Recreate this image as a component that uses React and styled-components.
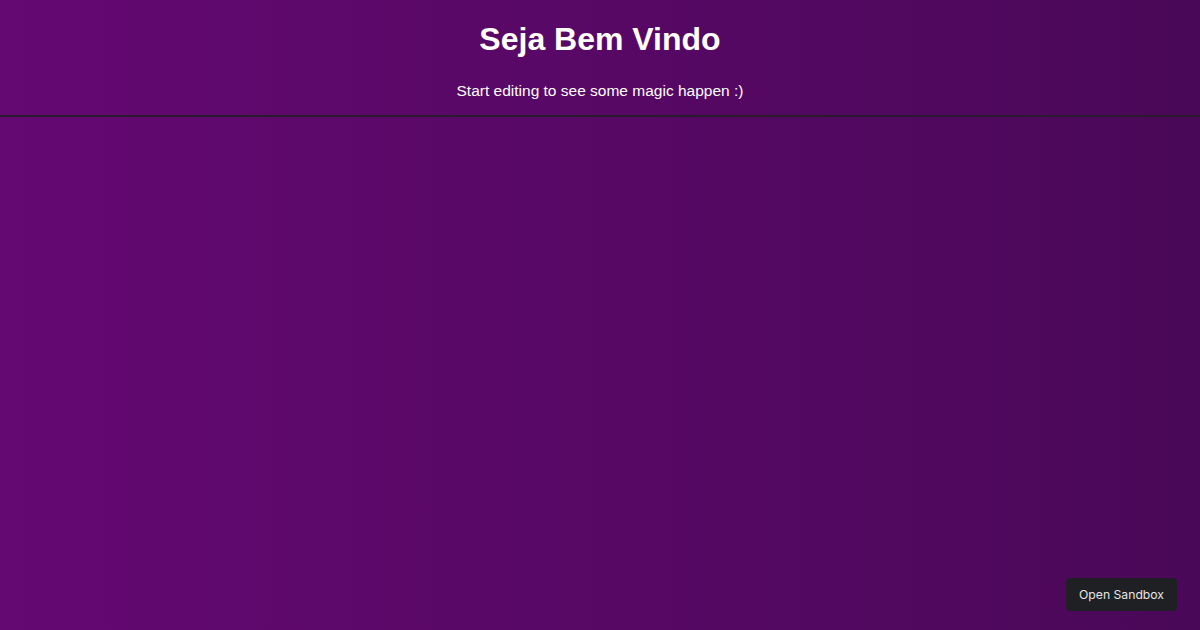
import styled, { createGlobalStyle } from "styled-components";

const GlobalStyle = createGlobalStyle`
  html, body {
    margin: 0;
    padding: 0;
    height: 100%;
  }

  body {
    font-family: "Liberation Sans", Arial, sans-serif;
    color: #fff;
  }

  #root {
    min-height: 100%;
  }
`;

const Page = styled.div`
  min-height: 100vh;
  background: linear-gradient(to right, #640872, #4a0858);
  text-align: center;
`;

const Header = styled.header`
  border-bottom: 2px solid #2a1a2e;
`;

const Title = styled.h1`
  margin: 0;
  padding: 21px 0 21px;
  font-size: 32px;
  font-weight: 700;
`;

const Subtitle = styled.p`
  margin: 0;
  padding: 3px 0 15px;
  font-size: 15.5px;
`;

const SandboxButton = styled.button`
  position: fixed;
  right: 23px;
  bottom: 19px;
  height: 33px;
  padding: 0 13px;
  border: none;
  border-radius: 4px;
  background: #1f2023;
  color: #e6e6e6;
  font-family: Inter, "Liberation Sans", sans-serif;
  font-size: 12.2px;
  cursor: pointer;
`;

const App = () => {
  return (
    <Page>
      <GlobalStyle />
      <Header>
        <Title>Seja Bem Vindo</Title>
        <Subtitle>Start editing to see some magic happen :)</Subtitle>
      </Header>
      <SandboxButton>Open Sandbox</SandboxButton>
    </Page>
  );
};

export default App;
